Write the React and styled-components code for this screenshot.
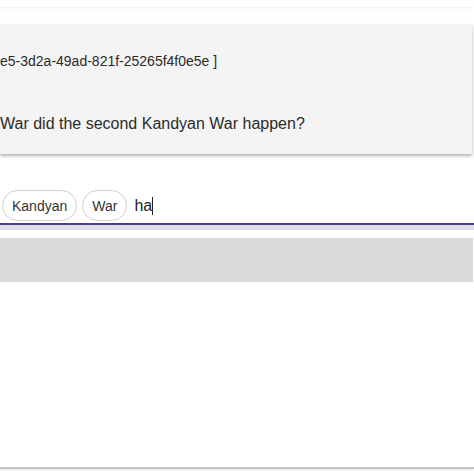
import React from "react"
import styled, { createGlobalStyle } from "styled-components"

const GlobalStyle = createGlobalStyle`
  html, body {
    margin: 0;
    padding: 0;
    background: #ffffff;
    font-family: Arial, "Liberation Sans", sans-serif;
    overflow: hidden;
  }
`

const Page = styled.div`
  width: 474px;
  height: 474px;
  display: flex;
  flex-direction: column;
`

const PrevCard = styled.div`
  height: 7px;
  width: 472px;
  background: #ffffff;
  box-shadow: 0 1px 2px rgba(0, 0, 0, 0.08);
`

const QuestionCard = styled.div`
  margin-top: 17px;
  width: 472px;
  height: 130px;
  background: #f4f4f4;
  box-shadow: 0 2px 3px rgba(0, 0, 0, 0.3);
  display: flex;
  flex-direction: column;
  color: #2b2b2b;
`

const IdLine = styled.div`
  margin-top: 28px;
  font-size: 14px;
  line-height: 18px;
`

const QuestionText = styled.div`
  margin-top: 44px;
  font-size: 16px;
  line-height: 20px;
`

const TagInput = styled.div`
  margin-top: 36px;
  width: 474px;
  height: 35px;
  display: flex;
  align-items: flex-start;
  gap: 5px;
  padding-left: 2px;
  box-sizing: border-box;
  border-bottom: 2px solid #4a4089;
`

const Chip = styled.span`
  height: 31px;
  padding: 0 9px;
  box-sizing: border-box;
  border: 1px solid #cfcfcf;
  border-radius: 16px;
  display: inline-flex;
  align-items: center;
  font-size: 14px;
  color: #333;
  background: #fff;
`

const Typed = styled.span`
  margin-left: 2px;
  height: 31px;
  display: inline-flex;
  align-items: center;
  font-size: 16px;
  color: #222;
`

const Caret = styled.span`
  display: inline-block;
  width: 1px;
  height: 18px;
  background: #222;
`

const FocusGlow = styled.div`
  height: 5px;
  width: 474px;
  background: #dfdde8;
`

const Suggestions = styled.div`
  margin-top: 8px;
  width: 473px;
  height: 44px;
  background: #dadada;
`

const Spacer = styled.div`
  flex: 1;
`

const BottomEdge = styled.div`
  height: 2px;
  width: 474px;
  background: #c4c4c4;
  margin-bottom: 5px;
  box-shadow: 0 1px 2px rgba(0, 0, 0, 0.12);
`

export default function App() {
  return (
    <>
      <GlobalStyle />
      <Page>
        <PrevCard />
        <QuestionCard>
          <IdLine>e5-3d2a-49ad-821f-25265f4f0e5e ]</IdLine>
          <QuestionText>War did the second Kandyan War happen?</QuestionText>
        </QuestionCard>
        <TagInput>
          <Chip>Kandyan</Chip>
          <Chip>War</Chip>
          <Typed>
            ha
            <Caret />
          </Typed>
        </TagInput>
        <FocusGlow />
        <Suggestions />
        <Spacer />
        <BottomEdge />
      </Page>
    </>
  )
}
